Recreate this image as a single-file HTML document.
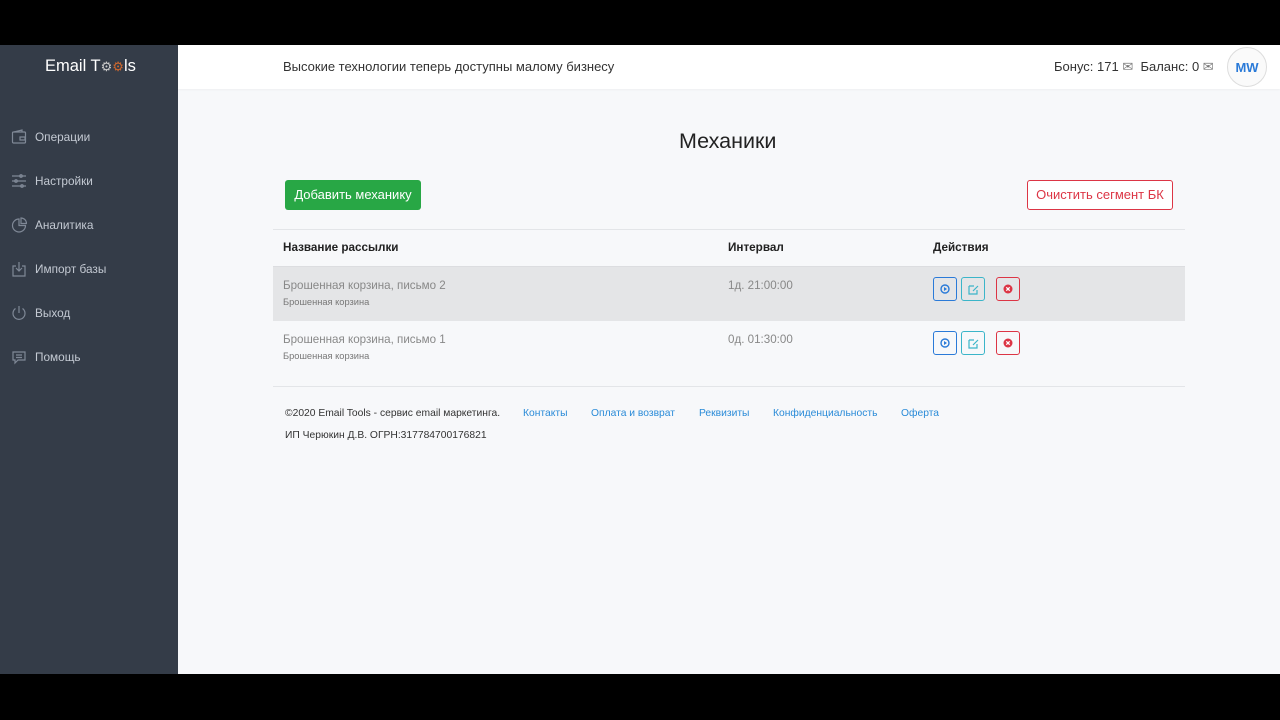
<!DOCTYPE html>
<html><head><meta charset="utf-8"><style>
*{margin:0;padding:0;box-sizing:border-box}
body{width:1280px;height:720px;background:#000;font-family:"Liberation Sans",Arial,sans-serif;position:relative;overflow:hidden}
.side{position:absolute;left:0;top:45px;width:178px;height:629px;background:#343c48}
.logo{position:absolute;left:45px;top:12px;color:#fff;font-size:16.5px;white-space:nowrap}
.nav{position:absolute;left:11px;color:#c4cad3;font-size:11.8px;display:flex;align-items:center}
.nav svg{width:16px;height:16px;margin-right:8px;stroke:#7f8896;fill:none;stroke-width:1.2}
.main{position:absolute;left:178px;top:45px;width:1102px;height:629px;background:#f7f8fa}
.head{position:absolute;left:0;top:0;width:1102px;height:44px;background:#fff;box-shadow:0 1px 2px rgba(0,0,0,.04)}
.t{position:absolute;white-space:nowrap}
.btn{position:absolute;border-radius:3px;font-size:13px;text-align:center}
.ib{position:absolute;width:24px;height:24px;border:1px solid;border-radius:3px;display:flex;align-items:center;justify-content:center}
a{color:#2a8bd8;text-decoration:none}
</style></head><body>
<div class="side">
<div class="logo">Email T<span style="color:#ccc;font-size:13px">⚙</span><span style="color:#d0682e;font-size:13px">⚙</span>ls</div>
<div class="nav" style="top:84px"><svg viewBox="0 0 16 16"><rect x="1.5" y="3" width="13" height="11" rx="1"/><path d="M3 3l8-2v2M9 8h5v3H9z"/></svg>Операции</div>
<div class="nav" style="top:128px"><svg viewBox="0 0 16 16"><path d="M1 3h14M1 8h14M1 13h14"/><circle cx="10" cy="3" r="1.3"/><circle cx="5" cy="8" r="1.3"/><circle cx="11" cy="13" r="1.3"/></svg>Настройки</div>
<div class="nav" style="top:172px"><svg viewBox="0 0 16 16"><path d="M8 2a6.5 6.5 0 1 0 6.5 6.5H8z"/><path d="M10 1v5.5h5.5A5.5 5.5 0 0 0 10 1z"/></svg>Аналитика</div>
<div class="nav" style="top:216px"><svg viewBox="0 0 16 16"><path d="M5 5H2v10h12V5h-3M8 1v9M5 7l3 3 3-3"/></svg>Импорт базы</div>
<div class="nav" style="top:260px"><svg viewBox="0 0 16 16"><path d="M8 1v7M4.5 3.5a6 6 0 1 0 7 0"/></svg>Выход</div>
<div class="nav" style="top:304px"><svg viewBox="0 0 16 16"><path d="M2 3h12v8H7l-3 3v-3H2z"/><path d="M5 6h6M5 8.5h6"/></svg>Помощь</div>
</div>
<div class="main">
<div class="head">
<div class="t" style="left:105px;top:14px;font-size:13px;color:#333">Высокие технологии теперь доступны малому бизнесу</div>
<div class="t" style="left:876px;top:14px;font-size:13px;color:#333">Бонус: 171 <span style="color:#777">✉</span>&nbsp;&nbsp;Баланс: 0 <span style="color:#777">✉</span></div>
<div style="position:absolute;left:1049px;top:2px;width:40px;height:40px;border-radius:50%;border:1px solid #ddd;background:#fafafa;color:#2a7ad8;font-weight:bold;font-size:13px;display:flex;align-items:center;justify-content:center">MW</div>
</div>
<div class="t" style="left:501px;top:84px;font-size:21.5px;color:#222">Механики</div>
<div class="btn" style="left:107px;top:135px;width:136px;height:30px;background:#28a745;color:#fff;line-height:30px">Добавить механику</div>
<div class="btn" style="left:849px;top:135px;width:146px;height:30px;border:1px solid #dc3545;color:#dc3545;line-height:28px;background:#fff">Очистить сегмент БК</div>
<div style="position:absolute;left:95px;top:184px;width:912px;height:1px;background:#e3e5e8"></div>
<div class="t" style="left:105px;top:196px;font-size:11.7px;font-weight:bold;color:#222">Название рассылки</div>
<div class="t" style="left:550px;top:196px;font-size:11.7px;font-weight:bold;color:#222">Интервал</div>
<div class="t" style="left:755px;top:196px;font-size:11.7px;font-weight:bold;color:#222">Действия</div>
<div style="position:absolute;left:95px;top:221px;width:912px;height:55px;background:#e4e5e7;border-top:1px solid #dcdde0"></div>
<div style="position:absolute;left:95px;top:341px;width:912px;height:1px;background:#e3e5e8"></div>
<div class="t" style="left:105px;top:234px;font-size:11.6px;color:#888">Брошенная корзина, письмо 2</div>
<div class="t" style="left:105px;top:252px;font-size:9.3px;color:#777">Брошенная корзина</div>
<div class="t" style="left:550px;top:234px;font-size:11.6px;color:#888">1д. 21:00:00</div>
<div class="t" style="left:105px;top:288px;font-size:11.6px;color:#888">Брошенная корзина, письмо 1</div>
<div class="t" style="left:105px;top:306px;font-size:9.3px;color:#777">Брошенная корзина</div>
<div class="t" style="left:550px;top:288px;font-size:11.6px;color:#888">0д. 01:30:00</div>
<div class="ib" style="left:755px;top:232px;border-color:#2a7ad8"><svg width="10" height="10" viewBox="0 0 10 10"><circle cx="5" cy="5" r="4" fill="none" stroke="#2a7ad8" stroke-width="1.4"/><path d="M4 3v4l3-2z" fill="#2a7ad8"/></svg></div>
<div class="ib" style="left:783px;top:232px;border-color:#3bb5c9"><svg width="11" height="11" viewBox="0 0 11 11"><path d="M1 2h5M1 2v8h8V6M5 7l5-5" fill="none" stroke="#3bb5c9" stroke-width="1.2"/></svg></div>
<div class="ib" style="left:818px;top:232px;border-color:#dc3545"><svg width="10" height="10" viewBox="0 0 10 10"><circle cx="5" cy="5" r="4.5" fill="#dc3545"/><path d="M3.3 3.3l3.4 3.4M6.7 3.3l-3.4 3.4" stroke="#fff" stroke-width="1.3"/></svg></div>
<div class="ib" style="left:755px;top:286px;border-color:#2a7ad8"><svg width="10" height="10" viewBox="0 0 10 10"><circle cx="5" cy="5" r="4" fill="none" stroke="#2a7ad8" stroke-width="1.4"/><path d="M4 3v4l3-2z" fill="#2a7ad8"/></svg></div>
<div class="ib" style="left:783px;top:286px;border-color:#3bb5c9"><svg width="11" height="11" viewBox="0 0 11 11"><path d="M1 2h5M1 2v8h8V6M5 7l5-5" fill="none" stroke="#3bb5c9" stroke-width="1.2"/></svg></div>
<div class="ib" style="left:818px;top:286px;border-color:#dc3545"><svg width="10" height="10" viewBox="0 0 10 10"><circle cx="5" cy="5" r="4.5" fill="#dc3545"/><path d="M3.3 3.3l3.4 3.4M6.7 3.3l-3.4 3.4" stroke="#fff" stroke-width="1.3"/></svg></div>
<div class="t" style="left:107px;top:363px;font-size:10.3px;color:#333">©2020 Email Tools - сервис email маркетинга.</div>
<div class="t" style="left:345px;top:363px;font-size:10.3px"><a>Контакты</a></div>
<div class="t" style="left:413px;top:363px;font-size:10.3px"><a>Оплата и возврат</a></div>
<div class="t" style="left:521px;top:363px;font-size:10.3px"><a>Реквизиты</a></div>
<div class="t" style="left:595px;top:363px;font-size:10.3px"><a>Конфиденциальность</a></div>
<div class="t" style="left:723px;top:363px;font-size:10.3px"><a>Оферта</a></div>
<div class="t" style="left:107px;top:385px;font-size:10.3px;color:#333">ИП Черюкин Д.В. ОГРН:317784700176821</div>
</div>
</body></html>
